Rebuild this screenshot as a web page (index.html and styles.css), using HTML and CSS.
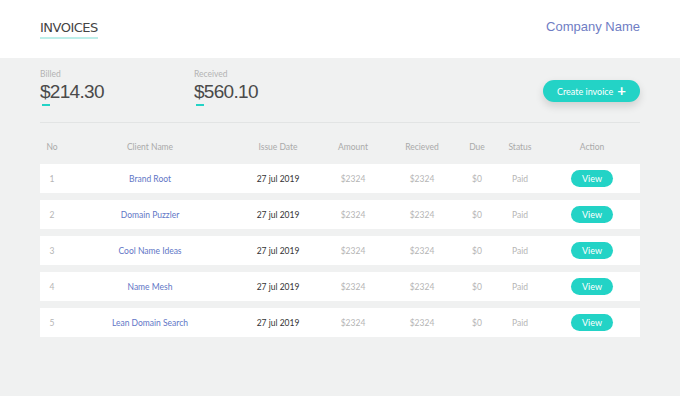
FILE: index.html
```html
<!DOCTYPE html>
<html lang="en">

<head>
  <meta charset="UTF-8">
  <meta name="viewport" content="width=device-width, initial-scale=1.0">
  <title>Invoices</title>
  <link rel="stylesheet" href="styles.css">
</head>

<body>
  <header class="topbar">
    <h1 class="title">INVOICES</h1>
    <a class="company" href="#">Company Name</a>
  </header>

  <main class="content">
    <section class="summary">
      <div class="stat">
        <span class="stat-label">Billed</span>
        <span class="stat-value">$214.30</span>
      </div>
      <div class="stat">
        <span class="stat-label">Received</span>
        <span class="stat-value">$560.10</span>
      </div>
      <button class="create-btn">Create invoice <span class="plus">+</span></button>
    </section>

    <div class="table">
      <div class="row head">
        <span>No</span>
        <span>Client Name</span>
        <span>Issue Date</span>
        <span>Amount</span>
        <span>Recieved</span>
        <span>Due</span>
        <span>Status</span>
        <span>Action</span>
      </div>
      <div class="row item">
        <span class="num">1</span>
        <span class="client">Brand Root</span>
        <span class="date">27 jul 2019</span>
        <span>$2324</span>
        <span>$2324</span>
        <span>$0</span>
        <span>Paid</span>
        <span><button class="view-btn">View</button></span>
      </div>
      <div class="row item">
        <span class="num">2</span>
        <span class="client">Domain Puzzler</span>
        <span class="date">27 jul 2019</span>
        <span>$2324</span>
        <span>$2324</span>
        <span>$0</span>
        <span>Paid</span>
        <span><button class="view-btn">View</button></span>
      </div>
      <div class="row item">
        <span class="num">3</span>
        <span class="client">Cool Name Ideas</span>
        <span class="date">27 jul 2019</span>
        <span>$2324</span>
        <span>$2324</span>
        <span>$0</span>
        <span>Paid</span>
        <span><button class="view-btn">View</button></span>
      </div>
      <div class="row item">
        <span class="num">4</span>
        <span class="client">Name Mesh</span>
        <span class="date">27 jul 2019</span>
        <span>$2324</span>
        <span>$2324</span>
        <span>$0</span>
        <span>Paid</span>
        <span><button class="view-btn">View</button></span>
      </div>
      <div class="row item">
        <span class="num">5</span>
        <span class="client">Lean Domain Search</span>
        <span class="date">27 jul 2019</span>
        <span>$2324</span>
        <span>$2324</span>
        <span>$0</span>
        <span>Paid</span>
        <span><button class="view-btn">View</button></span>
      </div>
    </div>
  </main>
</body>

</html>
```

FILE: styles.css
```css
html,
body {
  margin: 0;
  background: #f0f1f1;
  font-family: Lato, "Noto Sans", sans-serif;
}

.topbar {
  display: flex;
  justify-content: space-between;
  align-items: flex-start;
  height: 58px;
  box-sizing: border-box;
  padding: 18px 40px 0;
  background: #fff;
}

.title {
  margin: 0;
  font-family: "DejaVu Sans", sans-serif;
  font-weight: 400;
  font-size: 13px;
  letter-spacing: -0.5px;
  color: #444;
  line-height: 16px;
  padding-top: 2px;
  padding-bottom: 1px;
  border-bottom: 2px solid #bdeee9;
}

.company {
  font-family: "Liberation Sans", Arial, sans-serif;
  font-size: 13px;
  color: #6f7dc4;
  text-decoration: none;
  line-height: 16px;
  padding-top: 1px;
}

.content {
  padding: 0 40px;
}

.summary {
  display: flex;
  align-items: flex-start;
  padding-top: 11px;
  height: 65px;
  box-sizing: border-box;
  border-bottom: 1px solid #e2e4e4;
}

.stat {
  display: flex;
  flex-direction: column;
  width: 154px;
}

.stat-label {
  font-size: 8.5px;
  color: #b3b3b3;
  line-height: 11px;
}

.stat-value {
  position: relative;
  font-family: "Liberation Sans", Arial, sans-serif;
  font-size: 19px;
  letter-spacing: -0.7px;
  color: #4a4a4a;
  line-height: 24px;
}

.stat-value::after {
  content: "";
  position: absolute;
  left: 2px;
  bottom: -2px;
  width: 8px;
  height: 2px;
  background: #23d3c6;
}

.create-btn {
  margin-left: auto;
  margin-top: 11px;
  height: 22px;
  width: 97px;
  border: 0;
  border-radius: 11px;
  background: #23d3c6;
  color: #fff;
  font-family: Lato, sans-serif;
  font-size: 9px;
  box-shadow: 0 4px 9px rgba(0, 0, 0, 0.14);
  display: flex;
  align-items: center;
  justify-content: center;
  gap: 4px;
  padding: 0;
}

.plus {
  font-size: 15px;
  font-weight: 700;
  line-height: 1;
  margin-top: -1px;
}

.table {
  display: flex;
  flex-direction: column;
  gap: 7px;
}

.row {
  display: grid;
  grid-template-columns: 24px 172px 84px 66px 72px 38px 48px 96px;
  align-items: center;
  text-align: center;
  font-size: 8.5px;
  color: #b5b5b5;
}

.row.head {
  height: 34px;
  box-sizing: border-box;
  padding-top: 13px;
  color: #aaa;
}

.row.item {
  height: 29px;
  background: #fff;
}

.row .client {
  color: #5f76c6;
}

.row .date {
  color: #333;
}

.view-btn {
  width: 42px;
  height: 17px;
  border: 0;
  border-radius: 9px;
  background: #23d3c6;
  color: #fff;
  font-family: Lato, sans-serif;
  font-size: 9px;
  padding: 0;
}
```
